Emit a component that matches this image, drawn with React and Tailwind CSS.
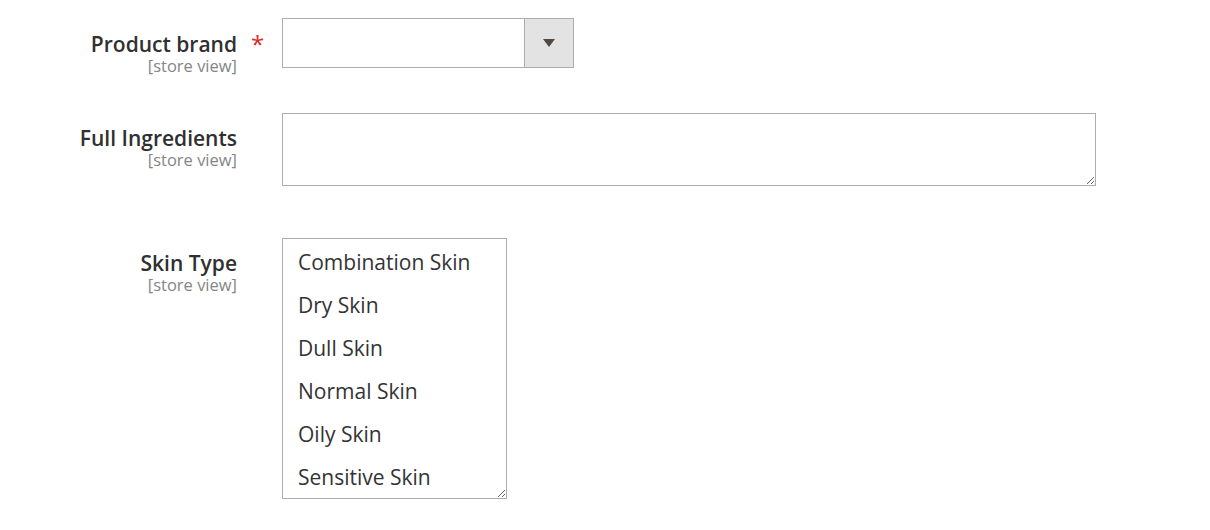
export default function App() {
  const skinTypes = [
    "Combination Skin",
    "Dry Skin",
    "Dull Skin",
    "Normal Skin",
    "Oily Skin",
    "Sensitive Skin",
  ];

  return (
    <div className="min-h-[530px] w-[1210px] bg-white pt-[18px] font-['Open_Sans',sans-serif] text-[#303030]">
      {/* Product brand */}
      <div className="flex h-[50px] items-start">
        <div className="w-[237px] pt-[14px] text-right">
          <div className="text-[21px] font-semibold leading-[24px]">Product brand</div>
          <div className="text-[16.5px] leading-[20px] text-[#858585]">[store view]</div>
        </div>
        <div className="w-[45px] pt-[14px] pl-[14px] text-[24px] leading-[24px] text-[#e22626]">*</div>
        <div className="flex h-[50px] w-[292px] border border-[#adadad] bg-white">
          <div className="flex-1" />
          <div className="flex w-[49px] items-center justify-center border-l border-[#adadad] bg-[#e3e3e3]">
            <svg width="12" height="8" viewBox="0 0 12 8">
              <path d="M0 0h12L6 8z" fill="#514943" />
            </svg>
          </div>
        </div>
      </div>

      {/* Full Ingredients */}
      <div className="mt-[45px] flex items-start">
        <div className="w-[237px] pt-[13px] text-right">
          <div className="text-[21px] font-semibold leading-[24px]">Full Ingredients</div>
          <div className="text-[16.5px] leading-[20px] text-[#858585]">[store view]</div>
        </div>
        <div className="w-[45px]" />
        <textarea className="block h-[73px] w-[814px] border border-[#adadad] bg-white outline-none" />
      </div>

      {/* Skin Type */}
      <div className="mt-[52px] flex items-start">
        <div className="w-[237px] pt-[13px] text-right">
          <div className="text-[21px] font-semibold leading-[24px]">Skin Type</div>
          <div className="text-[16.5px] leading-[20px] text-[#858585]">[store view]</div>
        </div>
        <div className="w-[45px]" />
        <div className="h-[261px] w-[225px] resize overflow-hidden border border-[#adadad] bg-white pt-[5px] pl-[15px]">
          {skinTypes.map((t) => (
            <div key={t} className="h-[43px] text-[21px] leading-[36px] text-[#333]">
              {t}
            </div>
          ))}
        </div>
      </div>
    </div>
  );
}
